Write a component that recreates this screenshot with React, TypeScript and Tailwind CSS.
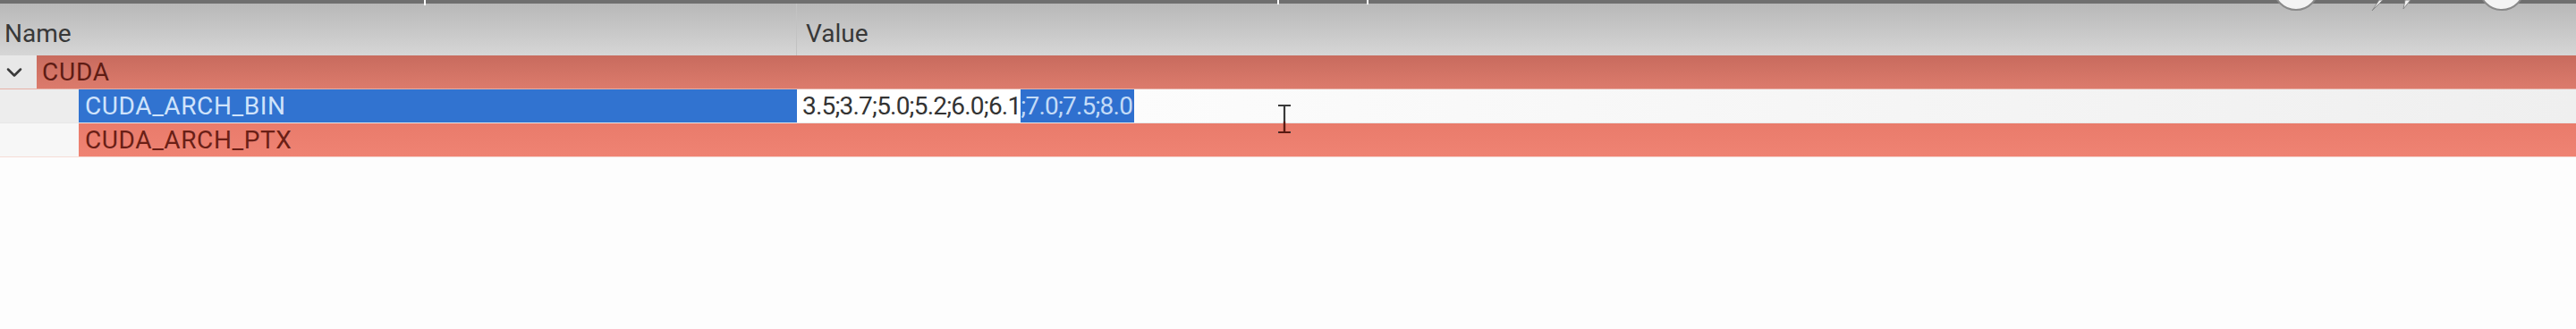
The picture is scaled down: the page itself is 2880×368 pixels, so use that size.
import { ChevronDown } from "lucide-react";

const font = { fontFamily: "Roboto, 'Noto Sans', sans-serif" };

function IBeam() {
  return (
    <svg width="18" height="34" viewBox="0 0 18 34" className="absolute left-[1427px] top-[116px]">
      <path d="M2 2h14M9 2v30M2 32h14" stroke="#3a3a3a" strokeWidth="2.2" fill="none" />
      <path d="M9 20v12M3 32h12" stroke="#5a1a12" strokeWidth="2.2" fill="none" />
    </svg>
  );
}

export default function App() {
  return (
    <div className="relative h-[368px] w-[2880px] overflow-hidden bg-[#fdfdfd] text-[28px] leading-none" style={font}>
      {/* Header */}
      <div className="flex h-[62px] flex-col">
        <div className="h-[4px] bg-[#6f6f6f]" />
        <div className="flex flex-1 bg-gradient-to-b from-[#b8b8b8] to-[#d6d6d6]">
          <div className="flex w-[891px] items-center border-r border-[#c2c2c2] pl-[5px] pt-[10px] text-[#383838]">Name</div>
          <div className="flex flex-1 items-center pl-[10px] pt-[10px] text-[#383838]">Value</div>
        </div>
      </div>

      {/* CUDA group row */}
      <div className="flex h-[38px] border-b border-[#e6b0a6]">
        <div className="flex w-[41px] items-center bg-[#e8e8e8] pl-[2px]">
          <ChevronDown size={28} strokeWidth={2.2} color="#3a3a3a" />
        </div>
        <div className="flex flex-1 items-center bg-gradient-to-b from-[#c86b5e] to-[#dc7b6c] pl-[6px] tracking-[0.8px] text-[#5e1c14]">
          CUDA
        </div>
      </div>

      {/* CUDA_ARCH_BIN row */}
      <div className="flex h-[38px] border-b border-[#e8e8e8]">
        <div className="w-[88px] bg-[#ededed]" />
        <div className="flex w-[803px] items-center bg-[#3173d0] pl-[7px] tracking-[0.6px] text-[#cfe3fb]">CUDA_ARCH_BIN</div>
        <div className="flex flex-1 bg-gradient-to-r from-white to-[#efefef] pl-[1px]">
          <div className="flex items-center bg-white pl-[5px] tracking-[-0.8px] text-[#333333]">3.5;3.7;5.0;5.2;6.0;6.1</div>
          <div className="flex items-center bg-[#2f70cf] pr-[2px] tracking-[-0.8px] text-[#c3dbf7]">;7.0;7.5;8.0</div>
        </div>
      </div>

      {/* CUDA_ARCH_PTX row */}
      <div className="flex h-[38px] border-b border-[#f6dcd6]">
        <div className="w-[88px] bg-[#f7f7f7]" />
        <div className="flex flex-1 items-center bg-gradient-to-b from-[#e97b6b] to-[#ef8373] pl-[7px] tracking-[0.6px] text-[#6a1f16]">
          CUDA_ARCH_PTX
        </div>
      </div>

      <IBeam />

      {/* video overlay bits at top edge */}
      <div className="absolute left-[2541px] top-[-40px] h-[52px] w-[52px] rounded-full border-2 border-[#8a8a8a] bg-[#f4f4f4]" />
      <div className="absolute left-[2771px] top-[-40px] h-[52px] w-[52px] rounded-full border-2 border-[#8a8a8a] bg-[#f4f4f4]" />
      <svg width="60" height="14" viewBox="0 0 60 14" className="absolute left-[2650px] top-0">
        <path d="M2 12L10 0h4z" fill="#f2f2f2" stroke="#888" strokeWidth="1" />
        <path d="M37 10L39 0h6z" fill="#f2f2f2" stroke="#888" strokeWidth="1" />
      </svg>
      <div className="absolute left-[474px] top-0 h-[6px] w-[2px] bg-white" />
      <div className="absolute left-[1428px] top-0 h-[5px] w-[2px] bg-white" />
      <div className="absolute left-[1528px] top-0 h-[5px] w-[2px] bg-white" />
    </div>
  );
}
